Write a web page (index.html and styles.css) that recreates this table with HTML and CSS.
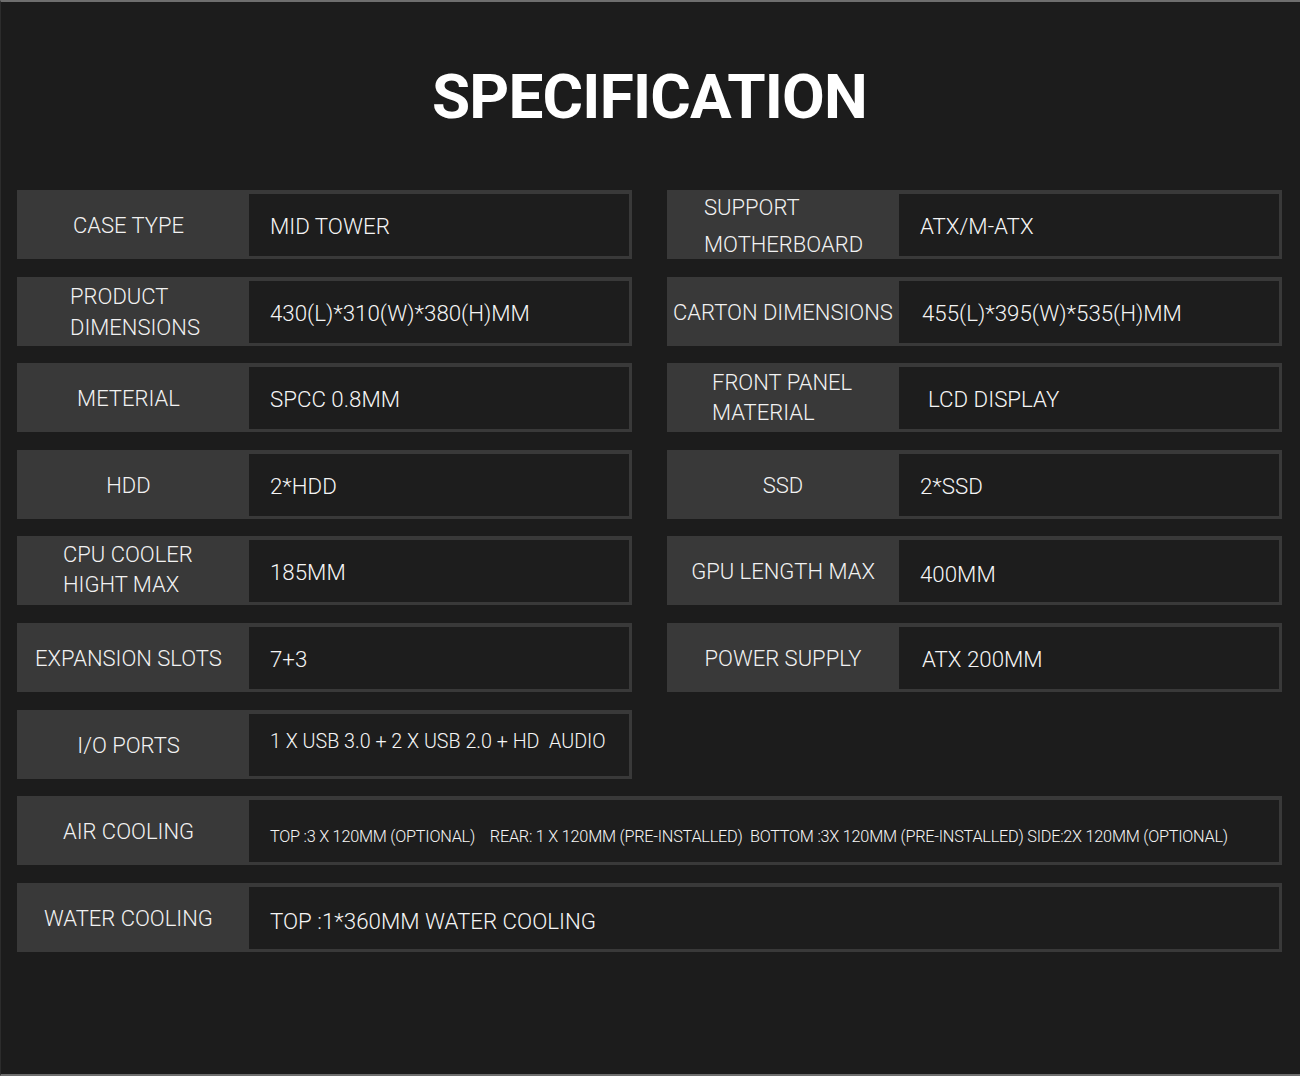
FILE: index.html
```html
<!DOCTYPE html>
<html lang="en">
<head>
<meta charset="utf-8">
<title>Specification</title>
<link rel="stylesheet" href="styles.css">
</head>
<body>
<div class="page">
  <h1 class="title">SPECIFICATION</h1>
  <div class="grid">
    <div class="row left"><div class="label">CASE TYPE</div><div class="value">MID TOWER</div></div>
    <div class="row right"><div class="label multi l-support">SUPPORT<br>MOTHERBOARD</div><div class="value">ATX/M-ATX</div></div>

    <div class="row left"><div class="label multi l-product">PRODUCT<br>DIMENSIONS</div><div class="value">430(L)*310(W)*380(H)MM</div></div>
    <div class="row right"><div class="label">CARTON DIMENSIONS</div><div class="value v-carton">455(L)*395(W)*535(H)MM</div></div>

    <div class="row left"><div class="label">METERIAL</div><div class="value">SPCC 0.8MM</div></div>
    <div class="row right"><div class="label multi l-front">FRONT PANEL<br>MATERIAL</div><div class="value v-lcd">LCD DISPLAY</div></div>

    <div class="row left"><div class="label">HDD</div><div class="value">2*HDD</div></div>
    <div class="row right"><div class="label">SSD</div><div class="value">2*SSD</div></div>

    <div class="row left"><div class="label multi l-cpu">CPU COOLER<br>HIGHT MAX</div><div class="value">185MM</div></div>
    <div class="row right"><div class="label">GPU LENGTH MAX</div><div class="value v-gpu">400MM</div></div>

    <div class="row left"><div class="label">EXPANSION SLOTS</div><div class="value">7+3</div></div>
    <div class="row right"><div class="label">POWER SUPPLY</div><div class="value v-carton">ATX 200MM</div></div>

    <div class="row left"><div class="label">I/O PORTS</div><div class="value v-io">1 X USB 3.0 + 2 X USB 2.0 + HD&nbsp; AUDIO</div></div>
    <div class="empty"></div>

    <div class="row left wide"><div class="label">AIR COOLING</div><div class="value v-air">TOP :3 X 120MM (OPTIONAL)&nbsp;&nbsp;&nbsp; REAR: 1 X 120MM (PRE-INSTALLED)&nbsp; BOTTOM :3X 120MM (PRE-INSTALLED) SIDE:2X 120MM (OPTIONAL)</div></div>

    <div class="row left wide"><div class="label">WATER COOLING</div><div class="value v-water">TOP :1*360MM WATER COOLING</div></div>
  </div>
</div>
</body>
</html>
```

FILE: styles.css
```css
html, body {
  margin: 0;
  padding: 0;
  background: #1c1c1c;
}

.page {
  box-sizing: border-box;
  width: 1300px;
  height: 1076px;
  background: #1c1c1c;
  border-top: 2px solid #6e6e6e;
  border-bottom: 2px solid #6e6e6e;
  border-left: 1px solid #2c2c2c;
  padding: 0 18px 0 16px;
  font-family: Roboto, "Liberation Sans", sans-serif;
  color: #f2f2f2;
}

.title {
  margin: 0;
  height: 188px;
  box-sizing: border-box;
  padding-top: 57px;
  text-align: center;
  font-family: Roboto, "Liberation Sans", sans-serif;
  font-weight: 700;
  font-size: 62px;
  line-height: 76px;
  letter-spacing: -0.8px;
  color: #ffffff;
}

.grid {
  display: grid;
  grid-template-columns: 615px 615px;
  column-gap: 35px;
  grid-auto-rows: 69px;
  row-gap: 17.6px;
}

.row {
  display: flex;
  background: #393939;
  padding: 4px 3px 3px 0;
}

.row.wide {
  grid-column: 1 / span 2;
}

.label {
  width: 232px;
  flex: none;
  box-sizing: border-box;
  display: flex;
  align-items: center;
  justify-content: center;
  margin-top: -4px;
  margin-bottom: -3px;
  padding-top: 3px;
  font-weight: 300;
  font-size: 22px;
  line-height: 30px;
  color: #f2f2f2;
}

.row.left .label {
  padding-right: 9px;
}

.label.multi,
.row.left .label.multi {
  justify-content: flex-start;
  text-align: left;
  padding-right: 0;
}

.l-product { padding-left: 53px; line-height: 31px; padding-top: 1px; }
.l-support { padding-left: 37px; line-height: 37px; padding-top: 3px; }
.l-front { padding-left: 45px; line-height: 30px; padding-top: 1px; }
.l-cpu { padding-left: 46px; line-height: 30px; padding-top: 0; padding-bottom: 2px; }

.value {
  flex: 1;
  background: #1d1d1d;
  display: flex;
  align-items: center;
  padding-left: 21px;
  padding-top: 2px;
  font-weight: 300;
  font-size: 22.3px;
  color: #f5f5f5;
}

.v-carton { padding-left: 23px; }
.v-lcd { padding-left: 29px; }
.v-gpu { padding-top: 5px; }

.v-io {
  font-size: 19.7px;
  padding-left: 21px;
  padding-top: 0;
  padding-bottom: 6px;
}

.v-air {
  font-size: 16.3px;
  letter-spacing: -0.25px;
  padding-left: 21px;
  padding-top: 10px;
}

.v-water {
  font-size: 22.3px;
  padding-left: 21px;
  padding-top: 7px;
}
```
